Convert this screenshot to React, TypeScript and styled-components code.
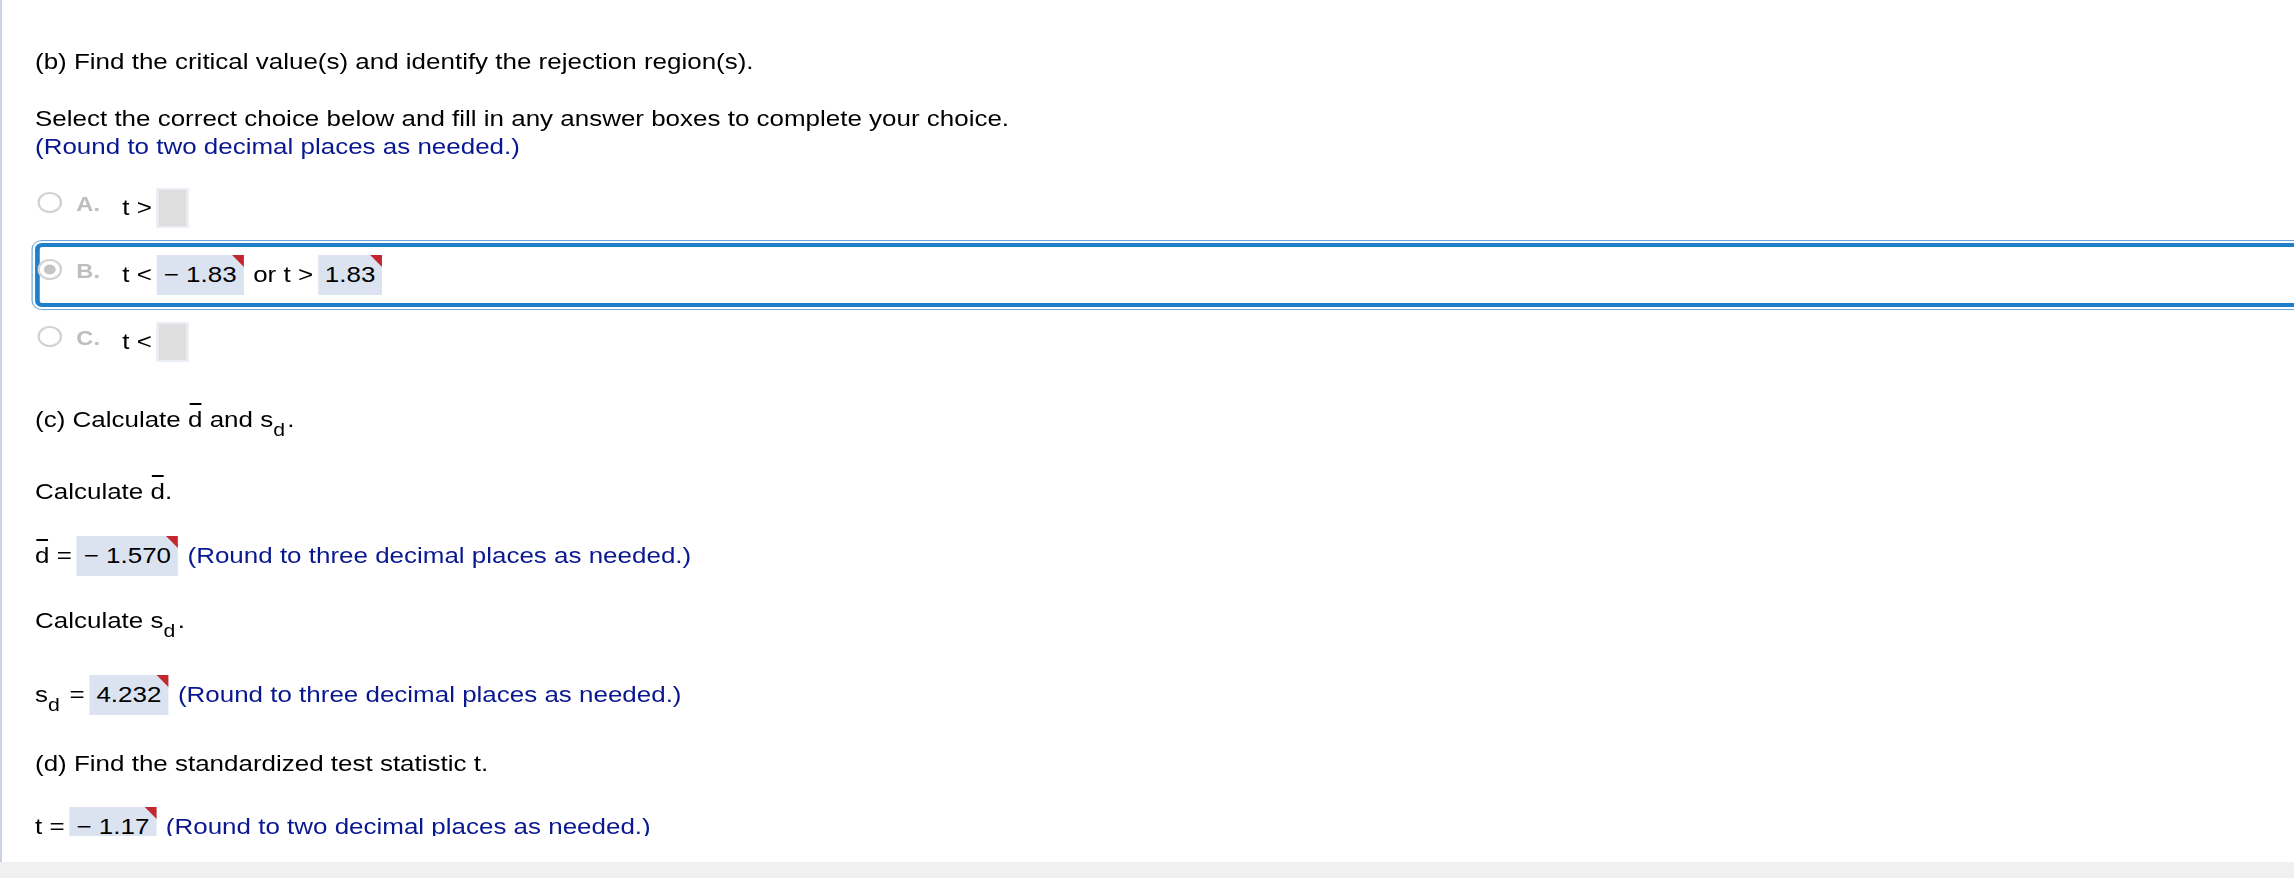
import React from 'react';
import styled, { createGlobalStyle } from 'styled-components';

const GlobalStyle = createGlobalStyle`
  html, body {
    margin: 0;
    padding: 0;
    background: #fff;
    overflow: hidden;
  }
  body {
    font-family: "Liberation Sans", Arial, sans-serif;
  }
`;

const Page = styled.div`
  width: 2294px;
  height: 878px;
  display: flex;
  flex-direction: column;
  overflow: hidden;
`;

const Pane = styled.div`
  height: 862px;
  border-left: 2px solid #cbd2e2;
  background: #fff;
  overflow: hidden;
`;

const Scroller = styled.div`
  height: 836px;
  overflow: hidden;
`;

// the capture is stretched sideways, so the sheet is too
const Sheet = styled.div`
  width: 1960px;
  box-sizing: border-box;
  transform: scaleX(1.18);
  transform-origin: 0 0;
  padding: 48px 0 0 28px;
  font-size: 22px;
  line-height: 28px;
  color: #000;
`;

const Footer = styled.div`
  height: 16px;
  background: #f0f0f0;
`;

const Line = styled.p<{ $mt?: number }>`
  margin: ${(p) => p.$mt ?? 0}px 0 0;
  white-space: nowrap;
`;

const Hint = styled.span`
  color: #0a1890;
`;

const OptionList = styled.div`
  margin-top: 15px;
  display: flex;
  flex-direction: column;
  gap: 3px;
`;

const OptionRow = styled.div<{ $selected?: boolean }>`
  display: flex;
  align-items: flex-start;
  padding: 12px 0 12px 2px;
  border-radius: 6px;
  box-shadow: ${(p) =>
    p.$selected
      ? 'inset 0 0 0 4px #1f7fc8, 0 0 0 2px #fff, 0 0 0 3px #68a8df'
      : 'none'};
`;

const RadioWrap = styled.span`
  display: block;
  width: 21px;
  height: 21px;
  margin: 4px 12px 0 0;
  flex: none;
`;

const Letter = styled.span`
  display: block;
  width: 39px;
  margin-top: 2px;
  flex: none;
  font-size: 20px;
  font-weight: bold;
  color: #bdbdbd;
`;

const Txt = styled.span<{ $ml?: number }>`
  display: block;
  margin: 6px 0 0 ${(p) => p.$ml ?? 0}px;
  white-space: nowrap;
`;

const AnswerRow = styled.div<{ $mt: number }>`
  display: flex;
  align-items: flex-start;
  margin-top: ${(p) => p.$mt}px;
`;

const EmptyBox = styled.span`
  display: block;
  width: 27px;
  height: 40px;
  margin-left: 4px;
  box-sizing: border-box;
  background: #dedede;
  border: 2px solid #e9edf4;
`;

const FilledBox = styled.span`
  position: relative;
  display: flex;
  align-items: center;
  height: 40px;
  margin-left: 4px;
  padding: 0 6px;
  background: #dce3f0;
  white-space: nowrap;

  &::after {
    content: '';
    position: absolute;
    top: 0;
    right: 0;
    border-top: 12px solid #c1272d;
    border-left: 10px solid transparent;
  }
`;

const Bar = styled.span`
  position: relative;

  &::before {
    content: '';
    position: absolute;
    top: -4px;
    left: 1px;
    right: 1px;
    height: 2px;
    background: #000;
  }
`;

const Sub = styled.span`
  font-size: 18px;
  line-height: 0;
  vertical-align: -9px;
  margin-right: 2px;
`;

const Radio: React.FC<{ checked?: boolean }> = ({ checked }) => (
  <RadioWrap>
    <svg width="21" height="21" viewBox="0 0 21 21">
      <circle cx="10.5" cy="10.5" r="9.5" fill="#fff" stroke="#d2d2d2" strokeWidth="2" />
      {checked && <circle cx="10.5" cy="10.5" r="5" fill="#c4c4c4" />}
    </svg>
  </RadioWrap>
);

const Answer: React.FC<{ value: string }> = ({ value }) => <FilledBox>{value}</FilledBox>;

const App: React.FC = () => {
  return (
    <>
      <GlobalStyle />
      <Page>
        <Pane>
          <Scroller>
            <Sheet>
              <Line>(b) Find the critical value(s) and identify the rejection region(s).</Line>
              <Line $mt={29}>
                Select the correct choice below and fill in any answer boxes to complete your choice.
              </Line>
              <Line>
                <Hint>(Round to two decimal places as needed.)</Hint>
              </Line>

              <OptionList>
                <OptionRow>
                  <Radio />
                  <Letter>A.</Letter>
                  <Txt>t &gt;</Txt>
                  <EmptyBox />
                </OptionRow>
                <OptionRow $selected>
                  <Radio checked />
                  <Letter>B.</Letter>
                  <Txt>t &lt;</Txt>
                  <Answer value={'\u2212 1.83'} />
                  <Txt $ml={8}>or t &gt;</Txt>
                  <Answer value="1.83" />
                </OptionRow>
                <OptionRow>
                  <Radio />
                  <Letter>C.</Letter>
                  <Txt>t &lt;</Txt>
                  <EmptyBox />
                </OptionRow>
              </OptionList>

              <Line $mt={32}>
                (c) Calculate <Bar>d</Bar> and s<Sub>d</Sub>.
              </Line>
              <Line $mt={44}>
                Calculate <Bar>d</Bar>.
              </Line>
              <AnswerRow $mt={30}>
                <Txt>
                  <Bar>d</Bar> =
                </Txt>
                <Answer value={'\u2212 1.570'} />
                <Txt $ml={8}>
                  <Hint>(Round to three decimal places as needed.)</Hint>
                </Txt>
              </AnswerRow>

              <Line $mt={31}>
                Calculate s<Sub>d</Sub>.
              </Line>
              <AnswerRow $mt={40}>
                <Txt>
                  s<Sub>d</Sub> =
                </Txt>
                <Answer value="4.232" />
                <Txt $ml={8}>
                  <Hint>(Round to three decimal places as needed.)</Hint>
                </Txt>
              </AnswerRow>

              <Line $mt={35}>(d) Find the standardized test statistic t.</Line>
              <AnswerRow $mt={29}>
                <Txt>t =</Txt>
                <Answer value={'\u2212 1.17'} />
                <Txt $ml={8}>
                  <Hint>(Round to two decimal places as needed.)</Hint>
                </Txt>
              </AnswerRow>
            </Sheet>
          </Scroller>
        </Pane>
        <Footer />
      </Page>
    </>
  );
};

export default App;
